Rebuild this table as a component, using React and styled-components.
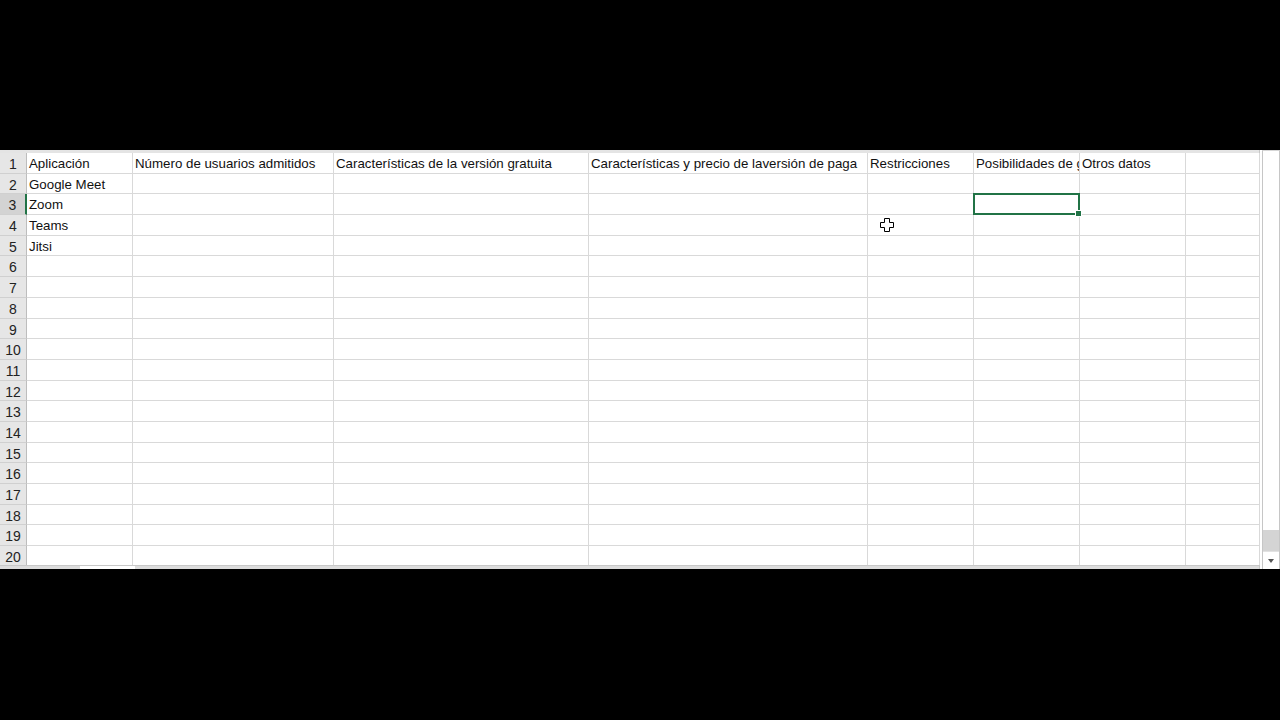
import React from 'react'
import styled, { createGlobalStyle } from 'styled-components'

const GlobalStyle = createGlobalStyle`
  html, body {
    margin: 0;
    padding: 0;
    background: #000;
  }
  body {
    font-family: 'Liberation Sans', Arial, sans-serif;
  }
`

const GREEN = '#217346'
const ROW_H = 20.7
const COLS = [106, 201, 255, 279, 106, 106, 106]

const Page = styled.div`
  width: 1280px;
  height: 720px;
  background: #000;
  padding-top: 150px;
  box-sizing: border-box;
`

const Sheet = styled.div`
  height: 419px;
  background: #fff;
  display: flex;
`

const Main = styled.div`
  flex: 1;
  display: flex;
  flex-direction: column;
  min-width: 0;
`

const Grid = styled.div`
  flex: 1;
  display: grid;
  grid-template-columns: 27px ${COLS.map((w) => `${w}px`).join(' ')} 1fr;
  grid-auto-rows: ${ROW_H}px;
  align-content: start;
  border-top: 3px solid #e4e4e4;
  overflow: hidden;
`

const RowHead = styled.div`
  background: ${(p) => (p.$active ? '#d3d3d3' : '#e6e6e6')};
  border-bottom: 1px solid #d0d0d0;
  border-right: ${(p) => (p.$active ? `2px solid ${GREEN}` : '1px solid #bdbdbd')};
  box-sizing: border-box;
  font-size: 14px;
  color: #222;
  text-align: center;
  line-height: ${ROW_H + 2}px;
`

const Cell = styled.div`
  position: relative;
  border-right: 1px solid #d9d9d9;
  border-bottom: 1px solid #d9d9d9;
  box-sizing: border-box;
  font-size: 13.3px;
  color: #111;
  line-height: ${ROW_H + 1}px;
  padding-left: 2px;
  white-space: nowrap;
  overflow: hidden;
  box-shadow: ${(p) => (p.$colTop ? `0 -3px 0 ${GREEN}` : 'none')};
  ${(p) =>
    p.$selected &&
    `
    overflow: visible;
    z-index: 2;
    &::before {
      content: '';
      position: absolute;
      left: -1px;
      top: -1px;
      right: -1px;
      bottom: -1px;
      border: 2px solid ${GREEN};
    }
    &::after {
      content: '';
      position: absolute;
      right: -3px;
      bottom: -3px;
      width: 5px;
      height: 5px;
      background: ${GREEN};
      border: 1px solid #fff;
    }
  `}
`

const Cursor = styled.svg`
  position: absolute;
  left: 12px;
  top: 3px;
  width: 14px;
  height: 14px;
  z-index: 3;
`

const Scrollbar = styled.div`
  width: 16px;
  margin-left: 2px;
  border-left: 1px solid #c6c6c6;
  border-right: 1px solid #c6c6c6;
  box-shadow: -2px 0 0 #fff, -3px 0 0 #c6c6c6;
  border-top: 1px solid #d6d6d6;
  display: flex;
  flex-direction: column;
  justify-content: flex-end;
  background: #fff;
`

const Thumb = styled.div`
  height: 21px;
  background: #d4d4d4;
`

const Arrow = styled.div`
  height: 17px;
  display: flex;
  align-items: center;
  justify-content: center;
  border-top: 1px solid #e2e2e2;
  &::before {
    content: '';
    border-left: 3.5px solid transparent;
    border-right: 3.5px solid transparent;
    border-top: 4px solid #555;
  }
`

const BottomStrip = styled.div`
  height: 3px;
  flex: none;
  display: flex;
  border-top: 1px solid #c8c8c8;
  background: #dcdcdc;
`

const Tab = styled.div`
  width: ${(p) => p.$w}px;
  background: ${(p) => (p.$light ? '#fff' : 'transparent')};
`

const data = [
  [
    'Aplicación',
    'Número de usuarios admitidos',
    'Características de la versión gratuita',
    'Características y precio de laversión de paga',
    'Restricciones',
    'Posibilidades de grabación',
    'Otros datos',
    '',
  ],
  ['Google Meet'],
  ['Zoom'],
  ['Teams'],
  ['Jitsi'],
]

function CrossCursor() {
  return (
    <Cursor viewBox="0 0 14 14">
      <path
        d="M4.5 0.5h5v4h4v5h-4v4h-5v-4h-4v-5h4z"
        fill="#fff"
        stroke="#000"
        strokeWidth="1"
      />
    </Cursor>
  )
}

export default function App() {
  const rows = Array.from({ length: 20 }, (_, r) => r)
  return (
    <>
      <GlobalStyle />
      <Page>
        <Sheet>
          <Main>
            <Grid>
              {rows.map((r) => (
                <React.Fragment key={r}>
                  <RowHead $active={r === 2}>{r + 1}</RowHead>
                  {Array.from({ length: 8 }, (_, c) => {
                    const text = (data[r] && data[r][c]) || ''
                    return (
                      <Cell
                        key={c}
                        $selected={r === 2 && c === 5}
                        $colTop={r === 0 && c === 5}
                      >
                        {text}
                        {r === 3 && c === 4 && <CrossCursor />}
                      </Cell>
                    )
                  })}
                </React.Fragment>
              ))}
            </Grid>
            <BottomStrip>
              <Tab $w={80} />
              <Tab $w={55} $light />
            </BottomStrip>
          </Main>
          <Scrollbar>
            <Thumb />
            <Arrow />
          </Scrollbar>
        </Sheet>
      </Page>
    </>
  )
}
